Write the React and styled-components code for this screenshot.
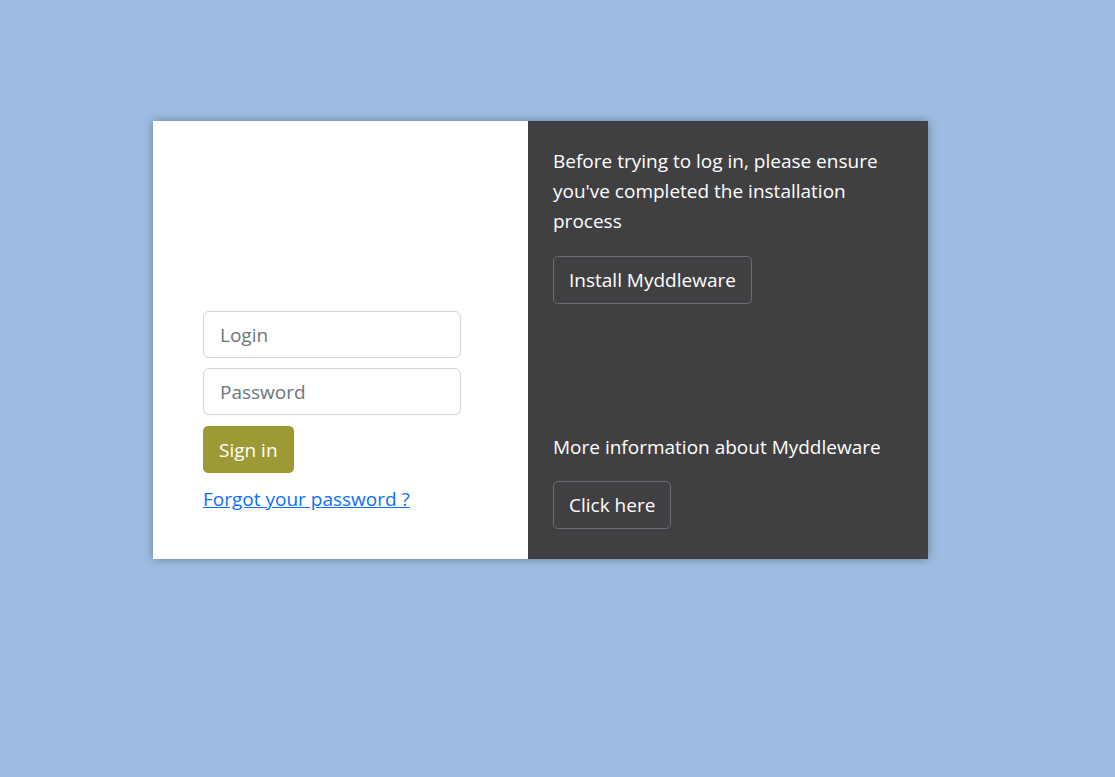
import React from "react";
import styled, { createGlobalStyle } from "styled-components";

const Global = createGlobalStyle`
  html, body { margin: 0; padding: 0; }
  body {
    background: #9dbee2;
    font-family: "Open Sans", "Noto Sans", sans-serif;
    min-height: 777px;
  }
  * { box-sizing: border-box; }
`;

const Page = styled.div`
  padding: 121px 0 0 153px;
`;

const Card = styled.div`
  display: flex;
  width: 775px;
  height: 438px;
  box-shadow: 0 0 10px rgba(0, 0, 0, 0.35);
`;

const LeftPanel = styled.div`
  width: 375px;
  background: #fff;
  padding: 190px 0 0 50px;
  display: flex;
  flex-direction: column;
`;

const Input = styled.input`
  width: 258px;
  height: 47px;
  padding: 8px 16px;
  font-family: inherit;
  font-size: 19px;
  color: #212529;
  border: 1px solid #ced4da;
  border-radius: 6px;
  margin-bottom: 10px;
  outline: none;
  &::placeholder { color: #6c757d; }
`;

const SignIn = styled.button`
  align-self: flex-start;
  height: 47px;
  margin-top: 1px;
  padding: 0 16px;
  font-family: inherit;
  font-size: 19px;
  color: #fff;
  background: #9d9a36;
  border: none;
  border-radius: 5px;
`;

const ForgotLink = styled.a`
  margin-top: 11px;
  font-size: 19px;
  line-height: 30px;
  color: #0d6efd;
  text-decoration: underline;
  align-self: flex-start;
`;

const RightPanel = styled.div`
  width: 400px;
  background: #404042;
  padding: 25px 25px 30px 25px;
  display: flex;
  flex-direction: column;
  justify-content: space-between;
  color: #fff;
`;

const Block = styled.div`
  display: flex;
  flex-direction: column;
  align-items: flex-start;
`;

const Text = styled.p`
  margin: 0 0 ${(p) => p.$gap}px 0;
  font-size: 19px;
  line-height: 30px;
`;

const OutlineButton = styled.button`
  height: 48px;
  padding: 0 15px;
  font-family: inherit;
  font-size: 19px;
  color: #fff;
  background: transparent;
  border: 1px solid #6c6c72;
  border-radius: 5px;
`;

export default function App() {
  return (
    <>
      <Global />
      <Page>
        <Card>
          <LeftPanel>
            <Input placeholder="Login" />
            <Input type="password" placeholder="Password" />
            <SignIn>Sign in</SignIn>
            <ForgotLink href="#">Forgot your password ?</ForgotLink>
          </LeftPanel>
          <RightPanel>
            <Block>
              <Text $gap={20}>
                Before trying to log in, please ensure you've completed the
                installation process
              </Text>
              <OutlineButton>Install Myddleware</OutlineButton>
            </Block>
            <Block>
              <Text $gap={19}>More information about Myddleware</Text>
              <OutlineButton>Click here</OutlineButton>
            </Block>
          </RightPanel>
        </Card>
      </Page>
    </>
  );
}
